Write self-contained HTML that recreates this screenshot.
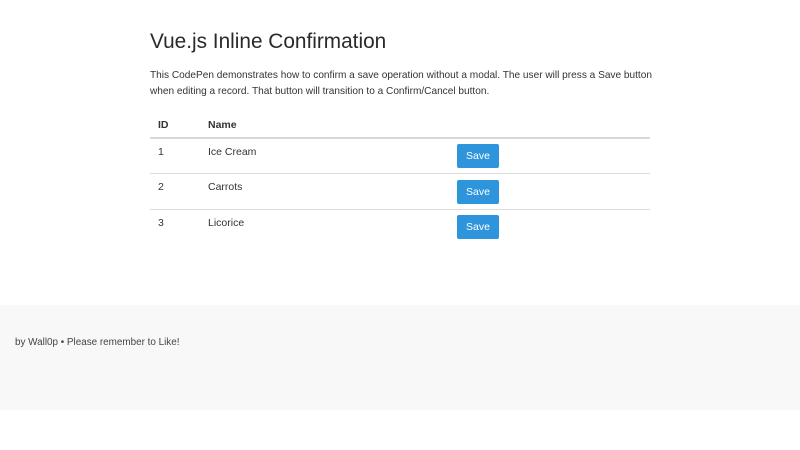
<!DOCTYPE html>
<html><head><meta charset="utf-8"><style>
*{margin:0;padding:0;box-sizing:border-box}
body{width:800px;height:450px;background:#fff;font-family:"Liberation Sans",sans-serif;color:#333;position:relative;overflow:hidden}
.a{position:absolute;white-space:nowrap}
h1{position:absolute;left:150px;top:30px;font-size:20.8px;font-weight:normal;color:#2a2a2a}
p{position:absolute;left:150px;top:68px;width:520px;font-size:10.1px;line-height:16px;color:#333}
.line{position:absolute;left:150px;width:500px;height:1px;background:#ddd}
.btn{position:absolute;left:457px;width:42px;height:24px;background:#2e95dc;border-radius:2px;color:#fff;font-size:10.5px;text-align:center;line-height:24px}
.t{font-size:10.5px}
.foot{position:absolute;left:0;top:305px;width:800px;height:105px;background:#f8f8f8}
</style></head><body>
<h1>Vue.js Inline Confirmation</h1>
<p>This CodePen demonstrates how to confirm a save operation without a modal. The user will press a Save button<br>when editing a record. That button will transition to a Confirm/Cancel button.</p>
<div class="a t" style="left:158px;top:119px;font-weight:bold">ID</div>
<div class="a t" style="left:208px;top:119px;font-weight:bold">Name</div>
<div class="line" style="top:137px;height:2px;background:#d8d8d8"></div>
<div class="a t" style="left:158px;top:146px">1</div>
<div class="a t" style="left:208px;top:146px">Ice Cream</div>
<div class="btn" style="top:144px">Save</div>
<div class="line" style="top:173px"></div>
<div class="a t" style="left:158px;top:181px">2</div>
<div class="a t" style="left:208px;top:181px">Carrots</div>
<div class="btn" style="top:180px">Save</div>
<div class="line" style="top:209px"></div>
<div class="a t" style="left:158px;top:217px">3</div>
<div class="a t" style="left:208px;top:217px">Licorice</div>
<div class="btn" style="top:215px">Save</div>
<div class="foot"></div>
<div class="a" style="left:15px;top:337px;color:#444;font-size:9.9px">by Wall0p • Please remember to Like!</div>
</body></html>
